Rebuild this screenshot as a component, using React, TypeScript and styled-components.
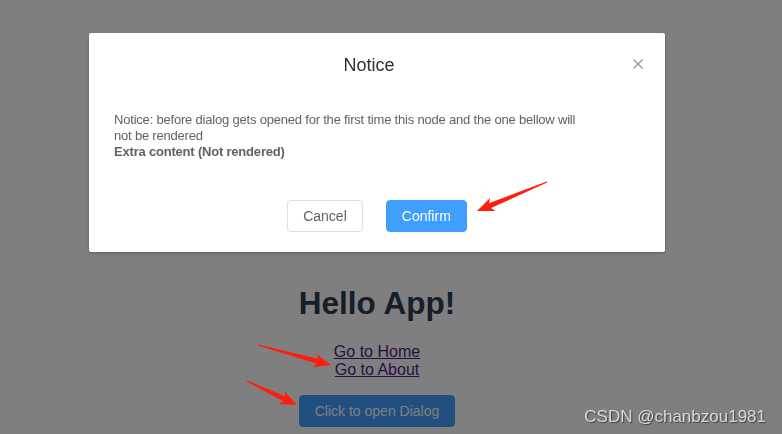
import styled, { createGlobalStyle } from "styled-components";

const GlobalStyle = createGlobalStyle`
  html, body {
    margin: 0;
    padding: 0;
    width: 782px;
    height: 434px;
    overflow: hidden;
    background: #fff;
    font-family: "Liberation Sans", Arial, Helvetica, sans-serif;
  }
`;

const Page = styled.div`
  width: 754px;
  padding-top: 285px;
  text-align: center;
  color: #2c3e50;
`;

const Heading = styled.h1`
  margin: 0 0 21px;
  font-size: 31.5px;
  font-weight: bold;
`;

const Nav = styled.nav`
  display: flex;
  flex-direction: column;
  align-items: center;
  font-size: 16px;
  margin-bottom: 16px;
`;

const NavLink = styled.a`
  color: #551a8b;
  text-decoration: underline;
`;

const OpenButton = styled.button`
  height: 32px;
  padding: 0 15px;
  border: 1px solid #409eff;
  border-radius: 4px;
  background: #409eff;
  color: #fff;
  font-family: inherit;
  font-size: 14px;
`;

const Overlay = styled.div`
  position: fixed;
  inset: 0;
  background: rgba(0, 0, 0, 0.5);
`;

const Dialog = styled.div`
  position: relative;
  width: 576px;
  margin: 33px 0 0 89px;
  background: #fff;
  border-radius: 2px;
  box-shadow: 0 1px 3px rgba(0, 0, 0, 0.3);
`;

const DialogHeader = styled.header`
  padding: 20px 36px 10px 20px;
  text-align: center;
`;

const DialogTitle = styled.span`
  font-size: 18px;
  line-height: 24px;
  color: #303133;
`;

const CloseButton = styled.button`
  position: absolute;
  top: 26px;
  right: 22px;
  width: 10px;
  height: 10px;
  padding: 0;
  border: none;
  background: none;
  display: flex;
`;

const DialogBody = styled.div`
  padding: 25px 25px 30px;
  font-size: 13px;
  letter-spacing: -0.2px;
  line-height: 16px;
  color: #606266;
`;

const BodyText = styled.div`
  max-width: 470px;
`;

const Strong = styled.div`
  font-weight: bold;
`;

const DialogFooter = styled.footer`
  display: flex;
  justify-content: center;
  gap: 23px;
  padding: 10px 20px 20px;
`;

const FooterButton = styled.button<{ $primary?: boolean }>`
  height: 32px;
  padding: 0 15px;
  border-radius: 4px;
  font-family: inherit;
  font-size: 14px;
  border: 1px solid ${(p) => (p.$primary ? "#409eff" : "#dcdfe6")};
  background: ${(p) => (p.$primary ? "#409eff" : "#fff")};
  color: ${(p) => (p.$primary ? "#fff" : "#606266")};
`;

const Annotations = styled.svg`
  position: fixed;
  inset: 0;
  pointer-events: none;
`;

const Watermark = styled.div`
  position: fixed;
  right: 16px;
  bottom: 7px;
  font-size: 17px;
  color: rgba(235, 235, 235, 0.85);
  text-shadow: 1px 1px 1px rgba(0, 0, 0, 0.5);
`;

type Pt = [number, number];

const Arrow = ({ from, to }: { from: Pt; to: Pt }) => {
  const dx = to[0] - from[0];
  const dy = to[1] - from[1];
  const len = Math.hypot(dx, dy);
  const angle = (Math.atan2(dy, dx) * 180) / Math.PI;
  const points = [
    [0, -0.6],
    [len - 14, -2.6],
    [len - 17, -7],
    [len, 0],
    [len - 17, 7],
    [len - 14, 2.6],
    [0, 0.6],
  ]
    .map((p) => p.join(","))
    .join(" ");
  return (
    <polygon
      points={points}
      fill="#ff1e0e"
      transform={`translate(${from[0]} ${from[1]}) rotate(${angle})`}
    />
  );
};

const App = () => {
  return (
    <>
      <GlobalStyle />
      <Page>
        <Heading>Hello App!</Heading>
        <Nav>
          <NavLink href="#/">Go to Home</NavLink>
          <NavLink href="#/about">Go to About</NavLink>
        </Nav>
        <OpenButton>Click to open Dialog</OpenButton>
      </Page>

      <Overlay>
        <Dialog>
          <DialogHeader>
            <DialogTitle>Notice</DialogTitle>
          </DialogHeader>
          <CloseButton aria-label="Close">
            <svg width="10" height="10" viewBox="0 0 10 10">
              <path d="M0.5 0.5 L9.5 9.5 M9.5 0.5 L0.5 9.5" stroke="#909399" strokeWidth="1.2" />
            </svg>
          </CloseButton>
          <DialogBody>
            <BodyText>
              Notice: before dialog gets opened for the first time this node and the one bellow will not be rendered
            </BodyText>
            <Strong>Extra content (Not rendered)</Strong>
          </DialogBody>
          <DialogFooter>
            <FooterButton>Cancel</FooterButton>
            <FooterButton $primary>Confirm</FooterButton>
          </DialogFooter>
        </Dialog>
      </Overlay>

      <Annotations width="782" height="434" viewBox="0 0 782 434">
        <Arrow from={[547, 182]} to={[477, 211]} />
        <Arrow from={[258, 345]} to={[331, 365]} />
        <Arrow from={[247, 381]} to={[297, 405]} />
      </Annotations>

      <Watermark>CSDN @chanbzou1981</Watermark>
    </>
  );
};

export default App;
